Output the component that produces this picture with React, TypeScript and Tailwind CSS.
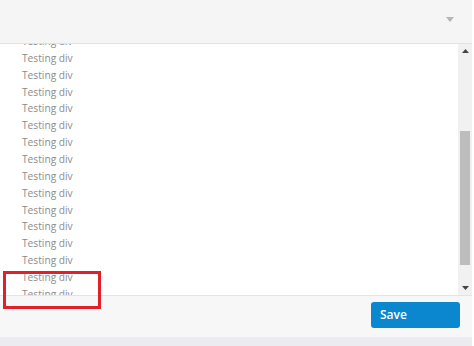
import { useMemo } from "react";

function Caret({ up }: { up?: boolean }) {
  return (
    <svg width="7" height="4" viewBox="0 0 7 4" className="block">
      {up ? <path d="M0 4 L3.5 0 L7 4 Z" fill="#444" /> : <path d="M0 0 L3.5 4 L7 0 Z" fill="#444" />}
    </svg>
  );
}

export default function App() {
  const items = useMemo(() => Array.from({ length: 25 }, (_, i) => i), []);

  return (
    <div className="relative w-[474px] h-[346px] bg-white overflow-hidden" style={{ fontFamily: '"Open Sans", sans-serif' }}>
      <div className="w-[472px] flex flex-col">
        {/* Select header */}
        <div className="h-[44px] bg-[#f5f5f5] border-b border-[#e2e2e2] flex items-center justify-end pr-[18px] relative z-10">
          <svg width="8" height="5" viewBox="0 0 8 5" className="mb-[4px]">
            <path d="M0 0 L4 5 L8 0 Z" fill="#b5b5b5" />
          </svg>
        </div>

        {/* Options list with scrollbar */}
        <div className="flex h-[251px]">
          <div className="flex-1 overflow-hidden">
            <ul className="mt-[-11px] pl-[22px]">
              {items.map((i) => (
                <li key={i} className="text-[10.2px] leading-[16.86px] text-[#8c8c8c]">
                  Testing div
                </li>
              ))}
            </ul>
          </div>
          <div className="w-[14px] bg-[#f1f1f1] flex flex-col items-center">
            <div className="h-[14px] flex items-center justify-center">
              <Caret up />
            </div>
            <div className="flex-1 w-full px-[2px] flex flex-col">
              <div className="h-[73px]" />
              <div className="h-[134px] bg-[#bdbdbd]" />
            </div>
            <div className="h-[14px] flex items-center justify-center">
              <Caret />
            </div>
          </div>
        </div>

        {/* Footer */}
        <div className="h-[42px] bg-[#f7f7f7] border-t border-[#e4e4e4] flex items-start justify-end pt-[6px] pr-[12px]">
          <button className="w-[89px] h-[26px] bg-[#0a87cf] rounded-[3px] text-white text-[12px] font-semibold text-left pl-[9px]">
            Save
          </button>
        </div>
        <div className="h-[9px] bg-[#ececf0]" />
      </div>

      {/* Annotation box */}
      <div className="absolute left-[3px] top-[271px] w-[98px] h-[38px] border-[3px] border-[#e0202a]" />
    </div>
  );
}
